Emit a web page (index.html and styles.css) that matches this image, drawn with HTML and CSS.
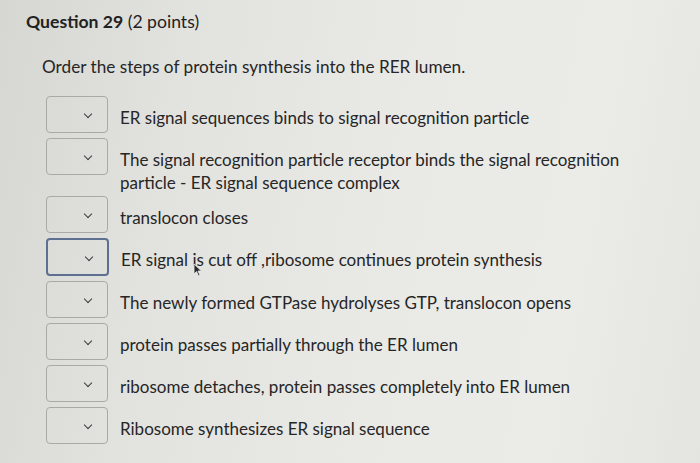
FILE: index.html
```html
<!DOCTYPE html>
<html lang="en">
<head>
    <meta charset="UTF-8">
    <title>Question 29</title>
    <link rel="stylesheet" href="styles.css">
</head>
<body>
    <div class="question">
        <h1 class="q-title"><b>Question 29</b> (2 points)</h1>
        <p class="q-prompt">Order the steps of protein synthesis into the RER lumen.</p>

        <ul class="order-list">
            <li class="order-row">
                <span class="pick"><span class="chev"></span></span>
                <span class="step">ER signal sequences binds to signal recognition particle</span>
            </li>
            <li class="order-row">
                <span class="pick"><span class="chev"></span></span>
                <span class="step">The signal recognition particle receptor binds the signal recognition particle - ER signal sequence complex</span>
            </li>
            <li class="order-row">
                <span class="pick"><span class="chev"></span></span>
                <span class="step">translocon closes</span>
            </li>
            <li class="order-row">
                <span class="pick focus"><span class="chev"></span></span>
                <span class="step">ER signal is cut off ,ribosome continues protein synthesis</span>
            </li>
            <li class="order-row">
                <span class="pick"><span class="chev"></span></span>
                <span class="step">The newly formed GTPase hydrolyses GTP, translocon opens</span>
            </li>
            <li class="order-row">
                <span class="pick"><span class="chev"></span></span>
                <span class="step">protein passes partially through the ER lumen</span>
            </li>
            <li class="order-row">
                <span class="pick"><span class="chev"></span></span>
                <span class="step">ribosome detaches, protein passes completely into ER lumen</span>
            </li>
            <li class="order-row">
                <span class="pick"><span class="chev"></span></span>
                <span class="step">Ribosome synthesizes ER signal sequence</span>
            </li>
        </ul>
    </div>

    <!-- mouse pointer resting over the 4th step -->
    <svg class="cursor" width="10" height="14" viewBox="0 0 10 14">
        <path d="M1 1 L1 11 L3.5 8.5 L5.5 13 L7 12.3 L5 8 L8.5 8 Z" fill="#2b2b2b" stroke="#eee" stroke-width="0.8"/>
    </svg>
</body>
</html>
```

FILE: styles.css
```css
body {
    margin: 0;
    height: 463px;
    overflow: hidden;
    position: relative;
    font-family: Lato, "Open Sans", sans-serif;
    color: #262626;
    background: linear-gradient(100deg, #d6d6d3 0%, #e2e2df 25%, #e9e9e6 55%, #ebebe8 80%, #e4e4e1 100%);
}

.question {
    padding: 10px 0 0 26px;
}

.q-title {
    margin: 0;
    font-size: 17.6px;
    font-weight: 400;
    line-height: 24px;
    color: #222;
}

.q-title b {
    font-weight: 700;
}

.q-prompt {
    margin: 22px 0 0 16px;
    font-size: 17.2px;
    line-height: 22px;
}

.order-list {
    list-style: none;
    margin: 18px 0 0 20px;
    padding: 0;
}

.order-row {
    display: flex;
    align-items: flex-start;
    margin-bottom: 5px;
}

.order-row:nth-child(2) {
    margin-bottom: 7px;
}

/* dropdown box with a small chevron */
.pick {
    flex: none;
    width: 60px;
    height: 35px;
    border: 1.5px solid #a9a9a6;
    border-radius: 4px;
    position: relative;
}

.pick.focus {
    border: 2px solid #5f6f92;
    width: 59px;
    height: 34px;
}

.chev {
    position: absolute;
    left: 38px;
    top: 14px;
    width: 5px;
    height: 5px;
    border-right: 1.8px solid #3c3c3c;
    border-bottom: 1.8px solid #3c3c3c;
    transform: rotate(45deg);
}

.step {
    padding: 10px 0 0 12px;
    margin-bottom: -5px;
    font-size: 17px;
    line-height: 23px;
    max-width: 545px;
}

.cursor {
    position: absolute;
    left: 193px;
    top: 263px;
}
```
